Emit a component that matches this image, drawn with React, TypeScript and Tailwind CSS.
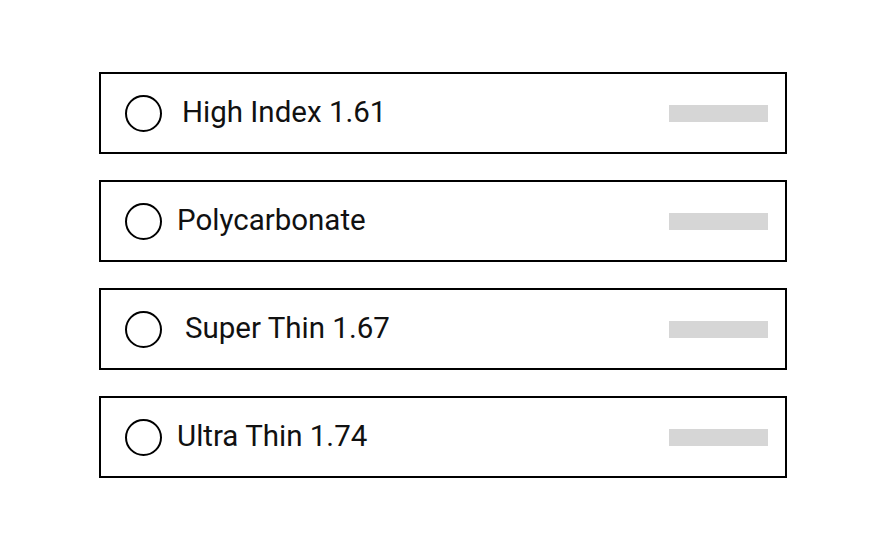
import React from 'react';

const options = [
  { label: 'High Index 1.61', gap: 'ml-[20px]' },
  { label: 'Polycarbonate', gap: 'ml-[15px]' },
  { label: 'Super Thin 1.67', gap: 'ml-[23px]' },
  { label: 'Ultra Thin 1.74', gap: 'ml-[15px]' },
];

function OptionRow({ label, gap }: { label: string; gap: string }) {
  return (
    <div className="flex items-center h-[82px] w-[688px] border-2 border-black bg-white pl-[24px]">
      <span className="w-[37px] h-[37px] rounded-full border-2 border-black shrink-0" />
      <span className={`${gap} text-[29.5px] text-[#111] leading-none`}>{label}</span>
      <span className="ml-auto mr-[17px] w-[99px] h-[17px] bg-[#d6d6d6]" />
    </div>
  );
}

export default function App() {
  return (
    <div
      className="w-[884px] h-[546px] bg-white pl-[99px] pt-[72px] flex flex-col gap-[26px]"
      style={{ fontFamily: 'Roboto, "Liberation Sans", sans-serif' }}
    >
      {options.map((o) => (
        <OptionRow key={o.label} label={o.label} gap={o.gap} />
      ))}
    </div>
  );
}
